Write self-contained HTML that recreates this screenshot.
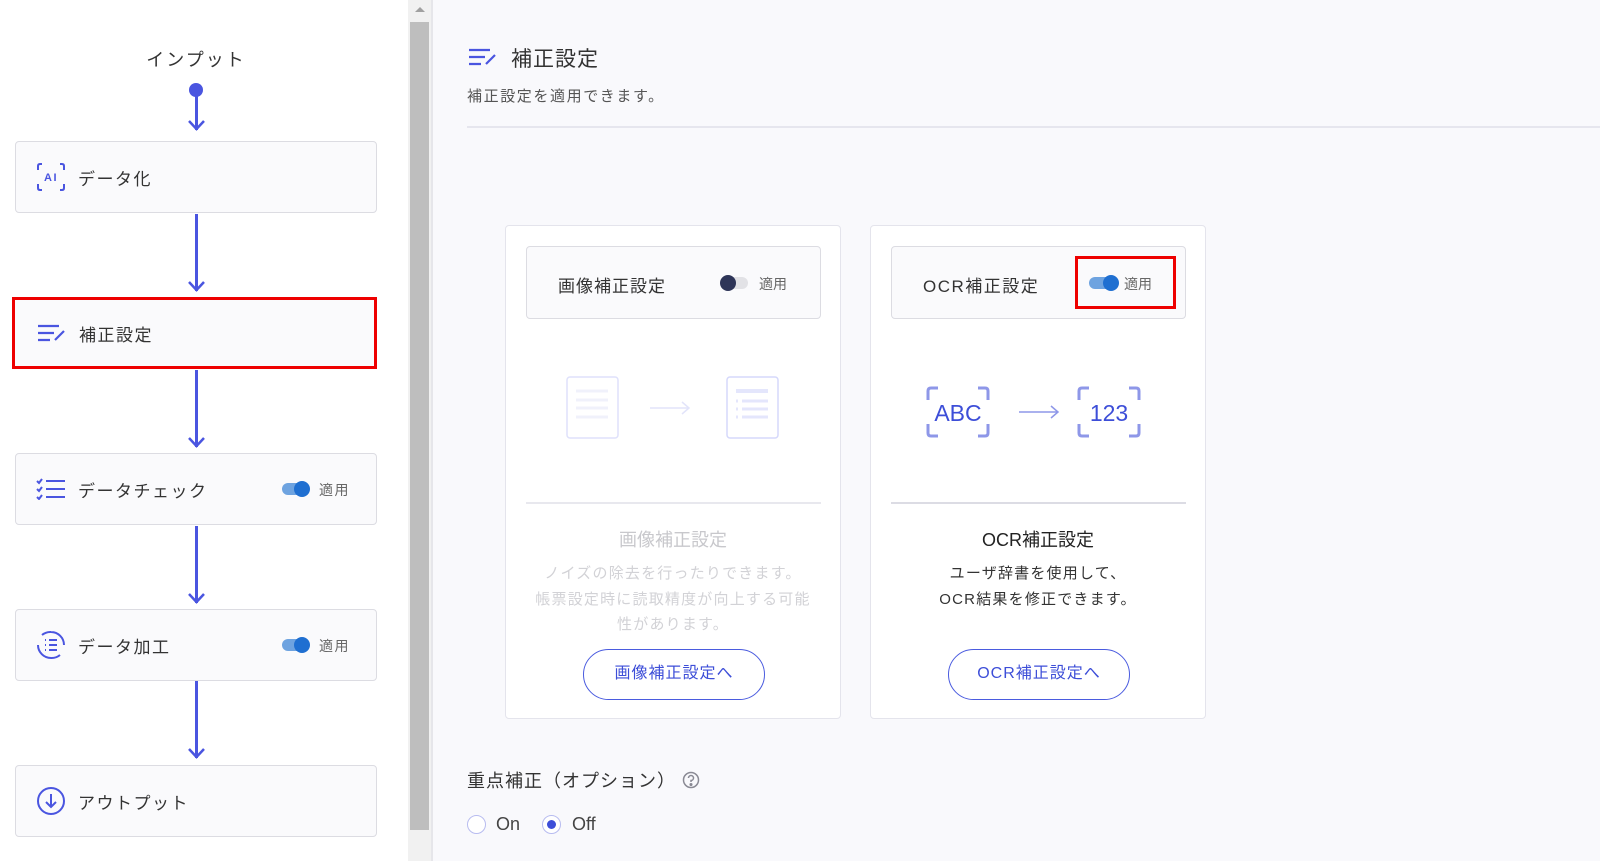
<!DOCTYPE html>
<html><head><meta charset="utf-8"><style>
*{box-sizing:border-box;margin:0;padding:0}
body{width:1600px;height:861px;overflow:hidden;background:#f9f9fc;font-family:"Liberation Sans","Noto Sans CJK JP",sans-serif;color:#333;position:relative}
.abs{position:absolute}
.left{left:0;top:0;width:408px;height:861px;background:#fff}
.track{left:408px;top:0;width:23px;height:861px;background:#f1f1f1}
.thumb{left:410px;top:22px;width:19px;height:808px;background:#bebebe}
.bline{left:431px;top:0;width:2px;height:861px;background:#e6e6ea}
.box{left:15px;width:362px;height:72px;background:#fafafc;border:1.5px solid #dcdce2;border-radius:4px;display:flex;align-items:center;padding-left:20px;font-size:17px;letter-spacing:1.5px;color:#333}
.box svg{margin-right:12px}
.vl{left:195px;width:2.5px;background:#4a55e0}
.ah{left:187px;width:19px;height:11px}
.tog{position:absolute;left:266px;top:29px;width:26px;height:12px;border-radius:6px;background:#6ea3e0}
.tog::after{content:"";position:absolute;right:-2px;top:-2px;width:16px;height:16px;border-radius:50%;background:#1f6fd1}
.tl{position:absolute;left:303px;top:26px;font-size:14px;color:#666}
.card{top:225px;width:336px;height:494px;background:#fff;border:1.5px solid #e4e4ec;border-radius:4px}
.hd{position:absolute;left:20px;top:20px;width:295px;height:73px;background:#fafafc;border:1.5px solid #dcdce2;border-radius:4px}
.hd .t{position:absolute;left:31px;top:25px;font-size:17px;letter-spacing:1px;color:#333}
.hd .tl{left:232px;top:27px}
.div{position:absolute;left:20px;top:276px;width:295px;height:1.5px;background:#e8e8ee}
.ct{position:absolute;left:0;width:100%;text-align:center}
.btn{position:absolute;left:77px;top:423px;width:182px;height:51px;border:1.5px solid #4a5bdf;border-radius:26px;color:#3d4ed8;font-size:16px;text-align:center;line-height:48px;letter-spacing:1px}
</style></head><body>
<div class="abs left"></div>
<div class="abs track"></div>
<div class="abs thumb"></div>
<svg class="abs" style="left:413px;top:5px" width="14" height="8"><path d="M2 7L7 2L12 7Z" fill="#a0a0a0"/></svg>
<div class="abs bline"></div>

<div class="abs" style="left:120px;top:46px;width:152px;text-align:center;font-size:18px;letter-spacing:2px;color:#333">インプット</div>
<div class="abs" style="left:189px;top:83px;width:14px;height:14px;border-radius:50%;background:#4a55e0"></div>
<div class="abs vl" style="top:92px;height:38px"></div>
<svg class="abs ah" style="top:120px" width="19" height="11"><path d="M2 1L9.5 9L17 1" stroke="#4a55e0" stroke-width="2.5" fill="none"/></svg>
<div class="abs vl" style="top:214px;height:77px"></div>
<svg class="abs ah" style="top:281px" width="19" height="11"><path d="M2 1L9.5 9L17 1" stroke="#4a55e0" stroke-width="2.5" fill="none"/></svg>
<div class="abs vl" style="top:370px;height:77px"></div>
<svg class="abs ah" style="top:437px" width="19" height="11"><path d="M2 1L9.5 9L17 1" stroke="#4a55e0" stroke-width="2.5" fill="none"/></svg>
<div class="abs vl" style="top:526px;height:77px"></div>
<svg class="abs ah" style="top:593px" width="19" height="11"><path d="M2 1L9.5 9L17 1" stroke="#4a55e0" stroke-width="2.5" fill="none"/></svg>
<div class="abs vl" style="top:681px;height:77px"></div>
<svg class="abs ah" style="top:748px" width="19" height="11"><path d="M2 1L9.5 9L17 1" stroke="#4a55e0" stroke-width="2.5" fill="none"/></svg>

<div class="abs box" style="top:141px"><svg width="30" height="30" viewBox="0 0 30 30" fill="none" stroke="#4a55e0" stroke-width="2"><path d="M2 8V4Q2 2 4 2H6M24 2H26Q28 2 28 4V8M2 22V26Q2 28 4 28H6M24 28H26Q28 28 28 26V22"/><text x="8" y="19" font-size="11" font-weight="bold" fill="#4a55e0" stroke="none" font-family="Liberation Sans">AI</text></svg>データ化</div>
<div class="abs box" style="top:297px;left:12px;width:365px;border:3.5px solid #ee0000;border-radius:0;padding-left:22px"><svg width="30" height="20" viewBox="0 0 30 20" fill="none" stroke="#4a55e0" stroke-width="2.2"><path d="M1 3H22M1 10H17M1 17H13M18 17L27 8"/></svg>補正設定</div>
<div class="abs box" style="top:453px"><svg width="30" height="22" viewBox="0 0 30 22" fill="none" stroke="#4a55e0" stroke-width="2"><path d="M1 3L3 5L6 1M1 11L3 13L6 9M1 19L3 21L6 17M10 3H29M10 11H29M10 19H29"/></svg>データチェック<div class="tog"></div><div class="tl">適用</div></div>
<div class="abs box" style="top:609px"><svg width="30" height="30" viewBox="0 0 30 30" fill="none" stroke="#4a55e0" stroke-width="2"><path d="M15 2A13 13 0 0 1 28 15M15 28A13 13 0 0 1 2 15M6 5A13 13 0 0 1 15 2M24 25A13 13 0 0 1 15 28"/><path d="M13 10H21M13 15H21M13 20H21M9 10H10M9 15H10M9 20H10"/></svg>データ加工<div class="tog"></div><div class="tl">適用</div></div>
<div class="abs box" style="top:765px"><svg width="30" height="30" viewBox="0 0 30 30" fill="none" stroke="#4a55e0" stroke-width="2"><circle cx="15" cy="15" r="13"/><path d="M15 8V21M10 16L15 21L20 16"/></svg>アウトプット</div>

<svg class="abs" style="left:467px;top:47px" width="32" height="20" viewBox="0 0 30 20" fill="none" stroke="#4a55e0" stroke-width="2.2"><path d="M1 3H22M1 10H17M1 17H13M18 17L27 8"/></svg>
<div class="abs" style="left:511px;top:43px;font-size:21px;letter-spacing:1px;color:#333">補正設定</div>
<div class="abs" style="left:467px;top:85px;font-size:15px;letter-spacing:1.6px;color:#555">補正設定を適用できます。</div>
<div class="abs" style="left:467px;top:126px;width:1133px;height:2px;background:#e6e6ee"></div>

<div class="abs card" style="left:505px">
 <div class="hd"><div class="t">画像補正設定</div>
  <div style="position:absolute;left:195px;top:30px;width:26px;height:12px;border-radius:6px;background:#e2e2e6"></div>
  <div style="position:absolute;left:193px;top:28px;width:16px;height:16px;border-radius:50%;background:#2e3558"></div>
  <div class="tl">適用</div></div>
 <svg style="position:absolute;left:60px;top:150px" width="215" height="65" viewBox="0 0 215 65" fill="none">
  <rect x="1" y="1" width="51" height="61" rx="3" stroke="#dfe1fb" stroke-width="1.5"/>
  <path d="M10 15H42M10 24H42M10 32H42M10 41H42" stroke="#f0f1fb" stroke-width="3"/>
  <path d="M84 32H123M116 26L123 32L116 38" stroke="#e2e4fa" stroke-width="1.5"/>
  <rect x="161" y="1" width="51" height="61" rx="3" stroke="#d5d8fb" stroke-width="1.5"/>
  <path d="M170 15H202" stroke="#e4e6fc" stroke-width="4"/><path d="M170 25H172M176 25H202M170 33H172M176 33H202M170 41H172M176 41H202" stroke="#e4e6fc" stroke-width="3"/>
 </svg>
 <div class="div"></div>
 <div class="ct" style="top:300px;font-size:18px;color:#c8c8cc">画像補正設定</div>
 <div class="ct" style="top:335px;font-size:15px;line-height:25.5px;color:#d2d2d6;letter-spacing:1.2px">ノイズの除去を行ったりできます。<br>帳票設定時に読取精度が向上する可能<br>性があります。</div>
 <div class="btn">画像補正設定へ</div>
</div>

<div class="abs card" style="left:870px">
 <div class="hd"><div class="t" style="letter-spacing:1.5px">OCR補正設定</div>
  <div style="position:absolute;left:197px;top:30px;width:26px;height:12px;border-radius:6px;background:#6ea3e0"></div>
  <div style="position:absolute;left:211px;top:28px;width:16px;height:16px;border-radius:50%;background:#1f6fd1"></div>
  <div class="tl">適用</div></div>
 <div style="position:absolute;left:204px;top:30px;width:101px;height:53px;border:3.5px solid #ee0000"></div>
 <svg style="position:absolute;left:55px;top:160px" width="230" height="52" viewBox="0 0 230 52" fill="none" stroke="#8e97e8" stroke-width="3">
  <path d="M12 2H5Q2 2 2 5V14M52 2H59Q62 2 62 5V14M2 38V47Q2 50 5 50H12M62 38V47Q62 50 59 50H52"/>
  <path d="M163 2H156Q153 2 153 5V14M203 2H210Q213 2 213 5V14M153 38V47Q153 50 156 50H163M213 38V47Q213 50 210 50H203"/>
  <path d="M93 26H132M125 20L132 26L125 32" stroke-width="1.5"/>
  <text x="32" y="35" font-size="23" fill="#3d4ed8" stroke="none" text-anchor="middle" font-family="Liberation Sans">ABC</text>
  <text x="183" y="35" font-size="23" fill="#3d4ed8" stroke="none" text-anchor="middle" font-family="Liberation Sans">123</text>
 </svg>
 <div class="div" style="background:#dcdce4"></div>
 <div class="ct" style="top:300px;font-size:18px;color:#222">OCR補正設定</div>
 <div class="ct" style="top:335px;font-size:15px;line-height:25.5px;color:#333;letter-spacing:1.2px">ユーザ辞書を使用して、<br>OCR結果を修正できます。</div>
 <div class="btn">OCR補正設定へ</div>
</div>

<div class="abs" style="left:467px;top:767px;font-size:18px;letter-spacing:1px;color:#333">重点補正（オプション）</div>
<svg class="abs" style="left:682px;top:771px" width="18" height="18" fill="none" stroke="#8a8a94" stroke-width="1.5"><circle cx="9" cy="9" r="7.5"/><path d="M6.5 7A2.5 2.5 0 1 1 9 9.5V11"/><circle cx="9" cy="13.5" r=".8" fill="#8a8a94"/></svg>
<div class="abs" style="left:467px;top:815px;width:19px;height:19px;border-radius:50%;border:1.5px solid #b8bcf0;background:#fff"></div>
<div class="abs" style="left:496px;top:814px;font-size:18px;color:#444">On</div>
<div class="abs" style="left:542px;top:815px;width:19px;height:19px;border-radius:50%;border:1.5px solid #b8bcf0;background:#fff"></div>
<div class="abs" style="left:547px;top:820px;width:9px;height:9px;border-radius:50%;background:#3d4ed8"></div>
<div class="abs" style="left:572px;top:814px;font-size:18px;color:#444">Off</div>
</body></html>
